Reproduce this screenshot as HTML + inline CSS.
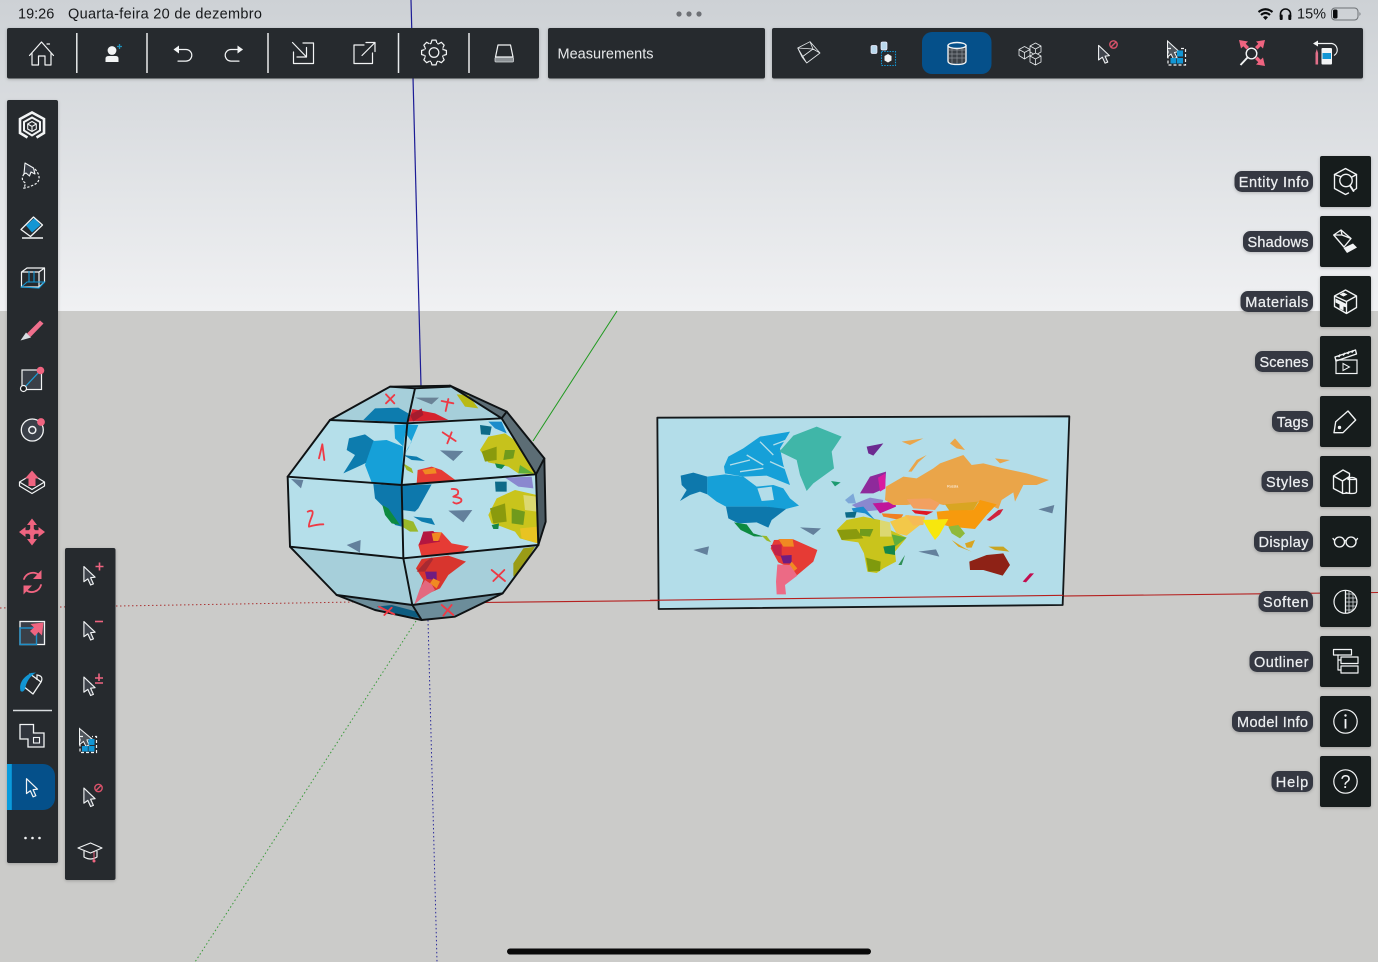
<!DOCTYPE html>
<html><head><meta charset="utf-8"><title>SketchUp</title>
<style>
html,body{margin:0;padding:0;background:#cbcbc9;overflow:hidden}
svg{display:block;font-family:"Liberation Sans",sans-serif}
.w{fill:none;stroke:#f2f4f5;stroke-width:1.35;stroke-linejoin:round;stroke-linecap:round}
.t{fill:none;stroke:#f2f4f5;stroke-width:1.2;stroke-linejoin:round;stroke-linecap:round}
.th{fill:none;stroke:#e4e8ea;stroke-width:.8;stroke-linejoin:round;stroke-linecap:round}
.lab{fill:#eceef0;stroke:#eceef0;stroke-width:.25;font-size:14.5px;text-anchor:middle}
.pill{fill:#343942}
.btn{fill:#181c1f}
.bar{fill:#26292d}
.c{fill:#3f444c;stroke:#f2f4f5;stroke-width:1;stroke-linejoin:round}
.b{fill:#1296d4}
.p{fill:#ef6480}
.ps{fill:none;stroke:#ef6480;stroke-width:1.8;stroke-linecap:round}
</style></head><body>
<svg width="1378" height="962" viewBox="0 0 1378 962" xmlns="http://www.w3.org/2000/svg">
<defs>
<linearGradient id="sky" x1="0" y1="0" x2="0" y2="1"><stop offset="0" stop-color="#cdd1d5"/><stop offset="1" stop-color="#f0f1f3"/></linearGradient>
<filter id="sh" x="-5%" y="-5%" width="110%" height="115%"><feDropShadow dx="0" dy="1" stdDeviation="1.5" flood-color="#000" flood-opacity=".22"/></filter>
<filter id="soft" x="-2%" y="-2%" width="104%" height="104%"><feGaussianBlur stdDeviation="1.1"/></filter>
<path id="cur" d="M-5,-8 L5,1.5 L1,2 L3.5,7.5 L1,8.5 L-1.5,3 L-5,5.5 Z"/>
<path id="tooth" d="M-2.9,-9.6 L-2,-12.4 H2 L2.9,-9.6" fill="none" stroke="#f2f4f5" stroke-width="1.25" stroke-linejoin="round"/>
</defs>

<!-- backdrop -->
<rect width="1378" height="311" fill="url(#sky)"/>
<rect y="311" width="1378" height="651" fill="#cbcbc9"/>

<!-- axes -->
<path d="M411,0 L421,386" stroke="#1c1c96" stroke-width="1.2" fill="none"/>
<path d="M533,441 L617,311" stroke="#1f9a1f" stroke-width="1" fill="none"/>
<path d="M480,602.5 L1378,592.5" stroke="#b5201f" stroke-width="1.1" fill="none"/>
<path d="M0,608 L355,602" stroke="#a33" stroke-width="1" stroke-dasharray="1.5 2.5" fill="none"/>
<path d="M416,621 L195,962" stroke="#3a9a3a" stroke-width="1" stroke-dasharray="1.5 2.5" fill="none"/>
<path d="M428,620 L437,962" stroke="#2a2a9a" stroke-width="1" stroke-dasharray="1.5 2.5" fill="none"/>

<!-- flat map -->
<g transform="translate(650,405) scale(.33333)">
<path d="M22,38 L1258,34 L1238,600 L26,612 Z" fill="#b3dde9"/>
<g filter="url(#soft)">
<path d="M92,212 L130,203 L172,215 L172,268 L150,260 L120,270 L90,288 L110,255 L95,240Z" fill="#0b78ac"/>
<path d="M172,215 L225,208 L280,215 L320,245 L370,240 L400,250 L420,280 L447,302 L400,314 L350,305 L228,305 L200,290 L172,268Z" fill="#12a0d8"/>
<path d="M222,185 L235,155 L280,130 L330,95 L420,80 L390,130 L400,180 L420,240 L350,212 L280,215 L225,205Z" fill="#12a0d8"/>
<path d="M240,180 L300,165 M290,150 L340,180 M330,110 L370,150 M270,200 L340,190 M370,120 L410,105 M360,170 L405,190" stroke="#b3dde9" stroke-width="4" fill="none"/>
<path d="M322,250 L365,245 L372,285 L335,288Z" fill="#b3dde9"/>
<path d="M388,140 L430,92 L500,65 L575,95 L545,140 L552,190 L490,235 L470,258 L450,210 L440,165Z" fill="#3fb6a8"/>
<path d="M228,305 L350,305 L408,312 L365,345 L355,368 L320,352 L265,355 L235,340Z" fill="#0b78ac"/>
<path d="M252,352 L290,358 L310,385 L342,395 L312,394 L272,375Z" fill="#0f8a40"/>
<path d="M335,392 L350,393 L364,412 L350,407Z" fill="#9ab82a"/>
<path d="M372,405 L430,403 L502,435 L490,470 L440,512 L425,490 L385,472 L362,430Z" fill="#e63a35"/>
<path d="M385,402 L428,402 L432,425 L400,425Z" fill="#f08a20"/>
<path d="M362,420 L395,418 L395,455 L375,450Z" fill="#c0204a"/>
<path d="M392,452 L425,450 L425,475 L400,475Z" fill="#6f1d80"/>
<path d="M425,470 L442,490 L430,500 L418,480Z" fill="#f08a20"/>
<path d="M382,478 L420,480 L442,512 L405,540 L408,568 L380,568 L378,530Z" fill="#ec6a85"/>
<path d="M560,375 L590,345 L640,335 L690,345 L720,375 L770,398 L735,440 L738,470 L700,490 L680,504 L652,500 L642,445 L625,412 L575,405Z" fill="#c9c41a"/>
<path d="M562,375 L620,372 L640,400 L575,405Z" fill="#8a9a10"/>
<path d="M690,345 L720,352 L725,395 L690,395Z" fill="#dcd870"/>
<path d="M700,425 L735,420 L735,450 L705,445Z" fill="#17864a"/>
<path d="M725,388 L770,398 L735,425Z" fill="#5fae3a"/>
<path d="M648,458 L692,470 L690,498 L655,500Z" fill="#7f9a10"/>
<path d="M630,372 L670,372 L660,395 L630,392Z" fill="#6f9a1c"/>
<path d="M745,480 L765,450 L755,480Z" fill="#2f8f55"/>
<path d="M630,265 L660,215 L708,200 L705,250 L670,265Z" fill="#8e2a9b"/>
<path d="M684,218 L706,205 L706,250 L690,260Z" fill="#d81aa0"/>
<path d="M605,300 L660,278 L700,285 L690,315 L640,320Z" fill="#8a88cf"/>
<path d="M668,295 L735,290 L738,305 L690,325Z" fill="#c0189a"/>
<path d="M605,310 L640,305 L675,345 L645,325 L610,320Z" fill="#1c8ccb"/>
<path d="M585,322 L620,320 L615,338 L588,338Z" fill="#0d6a88"/>
<path d="M585,285 L610,265 L618,295 L595,295Z" fill="#7da8d8"/>
<path d="M708,245 L760,215 L800,220 L850,190 L870,175 L940,150 L965,180 L1000,175 L1060,190 L1130,205 L1197,225 L1160,240 L1120,240 L1095,290 L1090,262 L1055,285 L1045,312 L1000,290 L880,300 L840,290 L770,300 L730,300 L705,285Z" fill="#eaa548"/>
<path d="M775,200 L800,165 L830,150 L805,172 L785,200Z" fill="#eaa548"/>
<path d="M900,115 L915,100 L945,135 L920,130Z" fill="#eaa548"/>
<path d="M770,282 L840,280 L870,295 L855,315 L790,310Z" fill="#f2a060"/>
<path d="M885,298 L985,290 L970,315 L900,320Z" fill="#d9a520"/>
<path d="M860,320 L900,316 L970,315 L990,285 L1040,298 L1010,330 L975,372 L900,365 L865,355Z" fill="#f79a0a"/>
<path d="M785,315 L850,320 L830,330 L795,325Z" fill="#e01820"/>
<path d="M695,325 L760,328 L750,345 L700,335Z" fill="#f08020"/>
<path d="M720,350 L775,330 L810,360 L770,392 L740,385Z" fill="#f3c84a"/>
<path d="M765,330 L825,335 L820,360 L790,362Z" fill="#f6bb55"/>
<path d="M818,345 L895,342 L868,390 L855,405 L838,380Z" fill="#f7e70e"/>
<path d="M895,365 L925,360 L945,385 L930,400 L905,385Z" fill="#8fb93a"/>
<path d="M905,405 L945,430 L965,440 L925,425Z" fill="#d9a520"/>
<path d="M945,415 L975,405 L965,428 L950,428Z" fill="#d9a520"/>
<path d="M1015,425 L1060,425 L1078,440 L1035,435Z" fill="#c9a520"/>
<path d="M1010,345 L1045,315 L1060,312 L1050,328 L1020,348Z" fill="#d0203a"/>
<path d="M958,470 L1010,450 L1060,445 L1080,480 L1058,512 L1000,495 L960,495Z" fill="#8e2412"/>
<path d="M1118,530 L1140,505 L1152,505 L1128,532Z" fill="#c21050"/>
<path d="M650,125 L700,115 L670,152 L655,145Z" fill="#6c2a90"/>
<path d="M755,110 L820,100 L780,120Z M1035,160 L1080,165 L1050,175Z" fill="#eaa548"/>
<path d="M543,228 L572,232 L555,244Z" fill="#1c9a70"/>
<path d="M450,367 L513,370 L490,390Z M130,435 L177,424 L172,450Z M805,440 L858,433 L868,455Z M1165,313 L1213,300 L1207,325Z" fill="#64809c"/>
</g>
<text x="908" y="248" font-size="11" fill="#fff" text-anchor="middle">Russia</text>
<path d="M22,38 L1258,34 L1238,600 L26,612 Z" fill="none" stroke="#14181a" stroke-width="5.500" stroke-linejoin="round"/>
<path d="M0,586 L1240,571" stroke="#b5201f" stroke-width="3.300"/>
</g>

<!-- globe -->
<g transform="translate(275,375) scale(.33333)">
<path d="M345,35 L525,32 L695,110 L808,250 L812,440 L790,510 L683,655 L540,725 L440,735 L300,705 L185,660 L45,515 L38,305 L165,135Z" fill="#a6cfda"/>
<path d="M525,32 L695,110 L808,250 L785,298 L680,130Z" fill="#5c6d75"/>
<path d="M808,250 L812,440 L790,510 L783,298Z" fill="#4b5a62"/>
<path d="M165,135 L397,145 L380,330 L38,305Z M397,145 L680,130 L782,298 L380,330Z M38,305 L380,330 L385,550 L45,515Z M380,330 L783,298 L790,510 L385,550Z" fill="#b5dfea"/>
<path d="M185,660 L412,690 L440,735 L300,705Z M412,690 L683,655 L540,725 L440,735Z" fill="#6c8d9a"/>
<g filter="url(#soft)">
<path d="M265,135 L300,100 L370,98 L400,115 L397,145Z" fill="#0e7cae"/>
<path d="M400,140 L412,102 L480,115 L520,135Z" fill="#d5212d"/>
<path d="M440,100 L405,120 L415,140 L445,120Z" fill="#a51c2f"/>
<path d="M420,68 L492,68 L470,88Z" fill="#6a8296"/>
<path d="M545,58 L580,60 L610,100 L570,95Z" fill="#b9ba18"/>
<path d="M222,190 L270,178 L300,200 L290,255 L260,270 L205,295 L240,240 L215,225Z" fill="#0e7cae"/>
<path d="M295,198 L335,195 L385,215 L380,328 L290,322 L270,270Z" fill="#12a0d8"/>
<path d="M358,150 L395,148 L385,215 L360,190Z" fill="#12a0d8"/>
<path d="M387,240 L410,200 L385,165 L395,148 L430,150 L400,220Z" fill="#12a0d8"/>
<path d="M495,226 L565,228 L535,258Z" fill="#64809c"/>
<path d="M615,150 L650,155 L645,180 L618,178Z" fill="#0d6a88"/>
<path d="M640,140 L680,140 L695,175 L660,160Z" fill="#1c8ccb"/>
<path d="M615,225 L640,185 L690,175 L725,200 L780,298 L730,295 L700,275 L640,262Z" fill="#c6c21a"/>
<path d="M620,230 L665,215 L665,255 L630,260Z" fill="#8a9a10"/>
<path d="M690,225 L720,225 L715,250 L685,255Z" fill="#6f9a1c"/>
<path d="M660,265 L690,270 L680,282 L665,278Z" fill="#17864a"/>
<path d="M735,270 L775,295 L730,295Z" fill="#5fae3a"/>
<path d="M425,325 L428,285 L470,275 L500,285 L545,318Z" fill="#e63a35"/>
<path d="M442,285 L480,278 L485,295 L450,298Z" fill="#f08a20"/>
<path d="M385,265 L410,280 L415,295 L395,285Z" fill="#9ab82a"/>
<path d="M385,240 L425,245 L450,258 L410,255Z" fill="#0e7cae"/>
<path d="M295,327 L380,332 L380,455 L360,450 L330,400 L300,370Z" fill="#0b78ac"/>
<path d="M322,390 L340,400 L375,450 L350,445 L330,420Z" fill="#0f8a40"/>
<path d="M48,312 L85,315 L78,340Z M215,510 L257,495 L255,533Z" fill="#64809c"/>
<path d="M380,332 L470,328 L430,400 L420,410 L380,405Z" fill="#0b78ac"/>
<path d="M382,430 L415,440 L430,470 L405,470 L382,455Z" fill="#9ab82a"/>
<path d="M415,425 L470,430 L480,450 L440,440Z" fill="#0e7cae"/>
<path d="M520,407 L592,405 L565,442Z" fill="#64809c"/>
<path d="M660,320 L695,320 L695,350 L662,350Z" fill="#0d6a88"/>
<path d="M690,308 L770,305 L775,340 L730,335Z" fill="#8a88cf"/>
<path d="M640,420 L665,370 L720,345 L785,360 L788,505 L735,490 L720,470 L680,455 L650,445Z" fill="#c9c41a"/>
<path d="M645,400 L690,385 L695,440 L655,445Z" fill="#8a9a10"/>
<path d="M745,360 L785,365 L785,410 L750,405Z" fill="#dcd870"/>
<path d="M710,400 L750,410 L745,450 L710,445Z" fill="#6f9a1c"/>
<path d="M735,460 L788,455 L788,505 L740,490Z" fill="#e8c324"/>
<path d="M650,450 L672,445 L670,462 L655,462Z" fill="#17864a"/>
<path d="M430,510 L450,470 L500,472 L530,505 L582,515 L565,530 L440,545Z" fill="#e63a35"/>
<path d="M432,510 L445,470 L475,468 L495,500Z" fill="#b41240"/>
<path d="M470,475 L500,472 L490,498 L475,498Z" fill="#f08a20"/>
<path d="M423,580 L440,552 L520,542 L573,560 L520,600 L495,640 L450,660 L420,685 L445,615Z" fill="#d8352f"/>
<path d="M450,590 L485,590 L485,615 L455,612Z" fill="#6f1d80"/>
<path d="M475,610 L495,620 L485,640 L465,625Z" fill="#f08a20"/>
<path d="M450,615 L470,628 L480,645 L440,670 L418,688 L435,640Z" fill="#e3677f"/>
<path d="M425,590 L452,560 L470,548 L475,552 L450,590Z" fill="#a82a30"/>
<path d="M715,565 L745,520 L780,515 L735,590 L715,605Z" fill="#9a9c18"/>
<path d="M305,695 L350,690 L425,710 L440,730 L370,718Z" fill="#0e5c80"/>
</g>
<g fill="none" stroke="#0e1214" stroke-width="5.800" stroke-linejoin="round" stroke-linecap="round">
<path d="M345,35 L525,32 L695,110 L808,250 L812,440 L790,510 L683,655 L540,725 L440,735 L300,705 L185,660 L45,515 L38,305 L165,135Z"/>
<path d="M165,135 L397,145 L680,130 M38,305 L380,330 L783,298 M45,515 L385,550 L790,510 M185,660 L412,690 L683,655 M345,35 L420,40 L525,35"/>
<path d="M420,40 L397,145 L380,330 L385,550 L412,690 L440,735"/>
<path d="M525,32 L680,130 L783,298 L790,510 M695,110 L680,130 M808,250 L783,298"/>
</g>
<g fill="none" stroke="#ee3a45" stroke-width="5.500" stroke-linecap="round" stroke-linejoin="round">
<path d="M333,58 L358,85 M358,60 L333,85"/>
<path d="M500,78 L535,85 M520,72 L512,108"/>
<path d="M503,172 L542,198 M530,172 L517,205"/>
<path d="M650,585 L690,618 M688,585 L655,618"/>
<path d="M500,690 L535,720 M530,690 L505,722"/>
<path d="M312,695 L358,718 M350,698 L328,720"/>
<path d="M132,250 L142,208 L148,255"/>
<path d="M98,410 Q120,400 110,425 Q100,450 102,455 Q125,448 145,448"/>
<path d="M530,342 Q555,340 548,358 L535,365 Q565,368 558,380 Q545,390 535,382"/>
</g>
</g>

<!-- status bar -->
<text x="18" y="18.5" font-size="14.5" fill="#16181a">19:26</text>
<text x="68" y="18.5" font-size="14.5" fill="#16181a" textLength="194">Quarta-feira 20 de dezembro</text>
<circle cx="679" cy="14" r="2.6" fill="#6d7075"/><circle cx="689" cy="14" r="2.6" fill="#6d7075"/><circle cx="699" cy="14" r="2.6" fill="#6d7075"/>
<g fill="none" stroke="#0a0c0e">
<path d="M1258.500,12 Q1265.500,6.500 1272.500,12" stroke-width="2.100"/>
<path d="M1261,15 Q1265.500,11 1270,15" stroke-width="2.100"/>
</g>
<path d="M1263,17.200 Q1265.500,15 1268,17.200 L1265.500,20Z" fill="#0a0c0e"/>
<path d="M1280.500,17 V14 a5,5 0 0 1 10,0 V17" fill="none" stroke="#0a0c0e" stroke-width="1.600"/>
<rect x="1279.700" y="14.500" width="3" height="5.500" rx="1" fill="#0a0c0e"/><rect x="1288.300" y="14.500" width="3" height="5.500" rx="1" fill="#0a0c0e"/>
<text x="1297" y="18.500" font-size="14.500" fill="#16181a">15%</text>
<rect x="1331.500" y="8" width="26.500" height="12" rx="3.500" fill="none" stroke="#6d7175" stroke-width="1"/>
<rect x="1333" y="9.500" width="4.500" height="9" rx="1.500" fill="#0a0c0e"/>
<path d="M1359.500,12 a2.500,2.500 0 0 1 0,4" fill="#6d7175"/>

<!-- top toolbars -->
<g filter="url(#sh)">
<rect class="bar" x="7" y="28" width="532" height="50.500" rx="2"/>
<rect class="bar" x="548" y="28" width="217" height="50.500" rx="2"/>
<rect class="bar" x="772" y="28" width="591" height="50.500" rx="2"/>
</g>
<g stroke="#e8eaec" stroke-width="1.500"><path d="M76.800,33 V73 M147,33 V73 M268,33 V73 M398.500,33 V73 M469,33 V73"/></g>
<text x="557.500" y="58.500" font-size="14.500" fill="#e6e8ea" textLength="96">Measurements</text>

<!-- home -->
<path class="t" d="M29.500,55.500 L41.500,42 L53.500,55.500 M32,53.500 V65 H38.500 V56 H45 V65 H51 V53.500 M47,44 H49.500"/>
<!-- user -->
<circle cx="112" cy="50.500" r="4.400" fill="#f2f4f5"/><path d="M105.500,62 V58.500 Q105.500,56 109,56 H115.500 Q118.500,56 118.500,58.500 V62Z" fill="#f2f4f5"/>
<path d="M119.500,44 V49 M117,46.500 H122" stroke="#1f8fb8" stroke-width="1.300"/>
<!-- undo/redo -->
<path class="t" d="M175,49.500 H186 a5.800,5.800 0 0 1 0,11.600 H178"/><path d="M173.500,49.500 L179,45.500 V53.500Z" fill="#f2f4f5"/>
<path class="t" d="M242,49.500 H231 a5.800,5.800 0 0 0 0,11.600 H239"/><path d="M243,49.500 L237.500,45.500 V53.500Z" fill="#f2f4f5"/>
<!-- import / export -->
<path class="t" d="M293.500,52 V63.500 H313.500 V43 H303 M292.500,42.500 L306.500,57 M306.500,47.500 V57 H297"/>
<path class="t" d="M364,45 H354 V63.500 H372.500 V53 M362,55.500 L375,42.500 M366,42.500 H375 V51.500"/>
<!-- gear -->
<g transform="translate(434,52.500)">
<circle r="9.600" fill="none" stroke="#f2f4f5" stroke-width="1.250" stroke-dasharray="1.740 5.800" stroke-dashoffset="-2.900"/>
<circle r="4.800" fill="none" stroke="#f2f4f5" stroke-width="1.250"/>
<use href="#tooth"/><use href="#tooth" transform="rotate(45)"/><use href="#tooth" transform="rotate(90)"/><use href="#tooth" transform="rotate(135)"/><use href="#tooth" transform="rotate(180)"/><use href="#tooth" transform="rotate(225)"/><use href="#tooth" transform="rotate(270)"/><use href="#tooth" transform="rotate(315)"/>
</g>
<!-- printer -->
<path class="t" d="M498,45 H510.500 L513,57 H495.500Z"/><rect x="495" y="57.500" width="18.500" height="4.500" rx="1" fill="#8b9094" stroke="#d0d3d6" stroke-width=".8"/>

<!-- right toolbar -->
<path class="th" d="M797.700,48 L810,41.700 L820,53 L806.700,63Z M797.700,48 L813,49 L820,53 M813,49 L810,41.700 M802,57 L813,49 M802,57 L806.700,63 M797.700,48 L802,57"/>
<g>
<rect x="871" y="45.500" width="6" height="8" rx="1.500" fill="#b9d8ec" stroke="#eef" stroke-width=".7"/>
<rect x="881" y="42" width="6" height="8" rx="1.500" fill="#b9d8ec" stroke="#eef" stroke-width=".7"/>
<rect x="881.500" y="51.500" width="14" height="14" fill="none" stroke="#1296d4" stroke-width="1.100" stroke-dasharray="1.500 1.200"/>
<path d="M884.500,56 L888,54 L891.500,56 V60.500 L888,62.500 L884.500,60.500Z" fill="#f2f4f5"/>
</g>
<rect x="922" y="32" width="69.500" height="42" rx="10" fill="#05508a"/>
<g>
<rect x="948" y="43.500" width="18" height="20" rx="2" fill="#3c4248"/>
<g stroke="#8a9096" stroke-width=".7"><path d="M952,46 V63 M957,46 V64 M962,46 V63 M949,50 H965 M949,54 H965 M949,58 H965"/></g>
<path class="w" d="M948,45.500 V61 Q948,64.500 957,64.500 Q966,64.500 966,61 V45.500"/><ellipse cx="957" cy="45.500" rx="9" ry="3" fill="#05508a" stroke="#f2f4f5" stroke-width="1.400"/>
</g>
<g class="th">
<path d="M1019,49.500 L1024.500,46.500 L1030,49.500 V55.500 L1024.500,59 L1019,55.500Z M1019,49.500 L1024.500,52.500 L1030,49.500 M1024.500,52.500 V59"/>
<path d="M1030,46 L1035.500,43 L1041,46 V52 L1035.500,55 L1030,52Z M1030,46 L1035.500,49 L1041,46 M1035.500,49 V55"/>
<path d="M1030,56 L1035.500,53 L1041,56 V62 L1035.500,65 L1030,62Z M1030,56 L1035.500,59 L1041,56 M1035.500,59 V65" fill="#26292d"/>
</g>
<use href="#cur" transform="translate(1104,54) scale(1.080)" class="c"/>
<circle cx="1113.500" cy="44.500" r="3.700" fill="none" stroke="#d9526a" stroke-width="1.400"/><path d="M1111,47 L1116,42" stroke="#d9526a" stroke-width="1.400"/>
<g>
<path d="M1167.500,41 L1179,51.500 L1174.500,52.500 L1177,57.500 L1173.500,59 L1171,54 L1167.500,57Z" fill="#50565c" stroke="#f2f4f5" stroke-width="1"/>
<path d="M1171,48.500 H1168 V65 H1185.500 V48.500 H1180" fill="none" stroke="#f2f4f5" stroke-width="1.200" stroke-dasharray="3 2"/>
<rect x="1177" y="50.500" width="6" height="6" class="b"/><rect x="1170.500" y="58" width="5.800" height="5.500" class="b"/><rect x="1177" y="58" width="6" height="5.500" class="b"/>
</g>
<g>
<circle cx="1251.500" cy="53.500" r="5.300" fill="none" stroke="#f2f4f5" stroke-width="1.400"/>
<path d="M1247.500,57.500 L1240.500,65" stroke="#f2f4f5" stroke-width="1.900"/>
<path class="p" d="M1239,40 L1248,41.500 L1245.700,43.800 L1249,47 L1246.500,49.500 L1243.300,46.200 L1241,48.500Z M1265,40 L1256,41.500 L1258.300,43.800 L1255,47 L1257.500,49.500 L1260.700,46.200 L1263,48.500Z M1265,66 L1256,64.500 L1258.300,62.200 L1255,59 L1257.500,56.500 L1260.700,59.800 L1263,57.500Z"/>
</g>
<g>
<path d="M1316,43.500 H1332 a6.500,6.500 0 0 1 2,12" fill="none" stroke="#f2f4f5" stroke-width="1.200"/><path d="M1313,43.500 L1318,40.500 V46.500Z" fill="#f2f4f5"/>
<rect x="1321.500" y="48" width="10.500" height="16.500" rx="1" fill="#f2f4f5"/><rect x="1322.500" y="53" width="8.500" height="6" class="b"/>
<rect x="1315.500" y="53" width="2.600" height="11.500" fill="#e2708a"/><path d="M1315.500,53 L1316.800,49 L1318.100,53Z" fill="#e2708a"/>
</g>

<!-- left toolbar -->
<g filter="url(#sh)">
<rect class="bar" x="7" y="100" width="51" height="763" rx="2"/>
<rect class="bar" x="65" y="548" width="50.500" height="332" rx="2"/>
</g>
<g fill="none" stroke="#f2f4f5" stroke-linejoin="miter">
<path d="M36.500,137.500 L44,133 V119 L32,112.500 L20,119 V133 L27.500,137.500" stroke-width="2.600"/>
<path d="M32,117.500 L40,122 V130.500 L32,135.500 L24,130.500 V122Z" stroke-width="2"/>
<path d="M32,121.500 L36.300,124 V129 L32,131.500 L27.700,129 V124Z M27.700,124 L32,126.500 L36.300,124 M32,126.500 V131.500" stroke-width="1.100"/>
</g>
<path d="M25,163 L33.500,168 L35,174 L31,172 L29.500,176 L26,173 L24,174Z" fill="#3a3f48" stroke="#f2f4f5" stroke-width="1.100" stroke-linejoin="round"/>
<path d="M35,169 Q42,177 37,183 Q31,187 22,188.500 M24,174 Q20,180 25.500,183 L24.500,187" fill="none" stroke="#f2f4f5" stroke-width="1.200" stroke-dasharray="2.400 1.600"/>
<path d="M26,225.500 L34.500,218 L40.500,225 L32,232.500Z" class="b"/>
<path d="M21,229.500 L33.500,217 L42.500,225 L30.500,236.500Z" fill="none" stroke="#f2f4f5" stroke-width="1.300" stroke-linejoin="round"/>
<path d="M22,238 H43" stroke="#f2f4f5" stroke-width="1.400"/>
<path class="t" d="M21.500,272 H39 V287 H21.500Z M21.500,272 L27,268 H44.500 V282 L39,287 M39,272 L44.500,268"/>
<path d="M21.500,287 L27,282 H44.500 L39,288 Z M29,271 V282 M34,271 V282" fill="none" stroke="#1296d4" stroke-width="1.100"/>
<path d="M27,333.500 L40,320.500 L43.500,323.500 L30.500,337Z" fill="#ef6f8c"/>
<path d="M20.500,340.500 L26,332.500 L31,337.500Z" fill="#d8dde2"/>
<rect x="22" y="370" width="19.500" height="19.500" fill="#3a3f48" stroke="#f2f4f5" stroke-width="1.200"/>
<path d="M24,388 L40,371" stroke="#1f9fd8" stroke-width="1.200"/>
<circle cx="40.500" cy="370.500" r="3.800" class="p"/>
<circle cx="23.500" cy="388.500" r="3" fill="#14181a" stroke="#f2f4f5" stroke-width="1.200"/>
<circle cx="32.300" cy="430" r="11" fill="#3a3f48" stroke="#f2f4f5" stroke-width="1.300"/>
<circle cx="32.300" cy="430" r="3.500" fill="none" stroke="#f2f4f5" stroke-width="1.500"/>
<circle cx="41" cy="422" r="3.900" class="p"/>
<path d="M19.500,482 L32,474.500 L44.500,482 L32,489.500Z M19.500,482 V486 L32,493.500 L44.500,486 V482" fill="#26292d" stroke="#f2f4f5" stroke-width="1.200" stroke-linejoin="round"/>
<path d="M32,470.500 L39,478.500 H35.500 V486 H28.500 V478.500 H25Z" class="p"/>
<g class="p">
<path d="M32,518.500 L37,525 H27Z M32,545.500 L37,539 H27Z M19,532 L25.500,527 V537Z M45,532 L38.500,527 V537Z"/>
<rect x="30.200" y="524" width="3.600" height="16"/><rect x="24" y="530.200" width="16" height="3.600"/>
<path d="M32,527 L37,532 L32,537 L27,532Z"/>
</g>
<path class="ps" d="M24,579 A9.500,9.500 0 0 1 39,575 M41,585 A9.500,9.500 0 0 1 26,590"/>
<path d="M41.500,570 V579 H33Z M23.500,594.500 V585.500 H32Z" class="p"/>
<rect x="20" y="621.500" width="24.500" height="23" fill="#3a3f48" stroke="#f2f4f5" stroke-width="1.300"/>
<path d="M20,628 H36.500 V644.500 H20Z" fill="none" stroke="#1f8fc8" stroke-width="1.400"/>
<path d="M43.500,622.500 L42,635.500 L38.500,632 L35,636 L30,631 L34,627.500 L30.500,624Z" class="p"/>
<path d="M30,674 L41,682 L33,694 L23,686Z" fill="#26292d" stroke="#f2f4f5" stroke-width="1.300" stroke-linejoin="round"/>
<path d="M41,682 Q44,676 37,675 L37,680" fill="none" stroke="#f2f4f5" stroke-width="1.200"/>
<path d="M20.500,691 Q18,680 31,673 L36,672.500 Q27,678 25,689Q23,693 20.500,691Z" class="b"/>
<path d="M13,710.500 H52" stroke="#d8dcdf" stroke-width="1.500"/>
<path d="M20,724.500 H33.500 V733 H44 V747 H28 V739 H20Z" fill="#30343c" stroke="#f2f4f5" stroke-width="1.300"/>
<rect x="33.500" y="737.500" width="6" height="5.500" fill="none" stroke="#f2f4f5" stroke-width="1.100"/>
<path d="M7,764 H43 a12,12 0 0 1 12,12 V798 a12,12 0 0 1 -12,12 H7Z" fill="#05508a"/>
<rect x="7" y="764" width="4.800" height="46" fill="#0a9bdc"/>
<use href="#cur" transform="translate(32,787.500) scale(1.100)" fill="#05508a" stroke="#f2f4f5" stroke-width="1.100" stroke-linejoin="round"/>
<circle cx="25.500" cy="838" r="1.300" fill="#f2f4f5"/><circle cx="32.500" cy="838" r="1.300" fill="#f2f4f5"/><circle cx="39.500" cy="838" r="1.300" fill="#f2f4f5"/>

<!-- secondary toolbar -->
<use href="#cur" transform="translate(89.500,575.500) scale(1.120)" class="c"/>
<path d="M95.500,566.500 H103.500 M99.500,562.500 V570.500" stroke="#ef6480" stroke-width="1.600"/>
<use href="#cur" transform="translate(89.500,630.500) scale(1.120)" class="c"/>
<path d="M95,621.500 H103" stroke="#ef6480" stroke-width="1.600"/>
<use href="#cur" transform="translate(89.500,686) scale(1.120)" class="c"/>
<path d="M95,678 H103 M99,673.500 V681 M95,683 H103" stroke="#ef6480" stroke-width="1.600"/>
<path d="M79.500,728.500 L92,739 L87,740 L89,745 L86,746.500 L83.500,741.500 L79.500,744.500Z" fill="#50565c" stroke="#f2f4f5" stroke-width="1"/>
<path d="M83,736.500 H80 V752.500 H96.500 V736.500 H92" fill="none" stroke="#f2f4f5" stroke-width="1.200" stroke-dasharray="3 2"/>
<rect x="88.500" y="739" width="6" height="6" class="b"/><rect x="82" y="746" width="5.800" height="5.500" class="b"/><rect x="88.500" y="746" width="6" height="5.500" class="b"/>
<use href="#cur" transform="translate(89.500,797) scale(1.120)" class="c"/>
<circle cx="98.500" cy="788" r="3.700" fill="none" stroke="#d9526a" stroke-width="1.400"/><path d="M96,790.500 L101,785.500" stroke="#d9526a" stroke-width="1.400"/>
<path d="M78,848 L90.500,843 L102,848 L90.500,853Z M84,851 V857 Q90.500,861 97,857 V851" fill="#26292d" stroke="#f2f4f5" stroke-width="1.200" stroke-linejoin="round"/>
<path d="M94,852 V860" stroke="#ef6480" stroke-width="1"/><circle cx="94" cy="861" r="1.500" class="p"/>

<!-- right side buttons -->
<g filter="url(#sh)">
<rect class="btn" x="1320" y="156" width="51" height="51" rx="2"/><rect class="btn" x="1320" y="216" width="51" height="51" rx="2"/><rect class="btn" x="1320" y="276" width="51" height="51" rx="2"/><rect class="btn" x="1320" y="336" width="51" height="51" rx="2"/><rect class="btn" x="1320" y="396" width="51" height="51" rx="2"/><rect class="btn" x="1320" y="456" width="51" height="51" rx="2"/><rect class="btn" x="1320" y="516" width="51" height="51" rx="2"/><rect class="btn" x="1320" y="576" width="51" height="51" rx="2"/><rect class="btn" x="1320" y="636" width="51" height="51" rx="2"/><rect class="btn" x="1320" y="696" width="51" height="51" rx="2"/><rect class="btn" x="1320" y="756" width="51" height="51" rx="2"/>
<rect class="pill" x="1234.500" y="171" width="78.500" height="21" rx="7.500"/><rect class="pill" x="1243" y="231" width="70" height="21" rx="7.500"/><rect class="pill" x="1240.500" y="291" width="72.500" height="21" rx="7.500"/><rect class="pill" x="1255" y="351" width="58" height="21" rx="7.500"/><rect class="pill" x="1272" y="411" width="41" height="21" rx="7.500"/><rect class="pill" x="1261.500" y="471" width="51.500" height="21" rx="7.500"/><rect class="pill" x="1254" y="531" width="59" height="21" rx="7.500"/><rect class="pill" x="1258.500" y="591" width="54.500" height="21" rx="7.500"/><rect class="pill" x="1249.500" y="651" width="63.500" height="21" rx="7.500"/><rect class="pill" x="1232" y="711" width="81" height="21" rx="7.500"/><rect class="pill" x="1271.500" y="771" width="41.500" height="21" rx="7.500"/>
</g>
<text class="lab" x="1273.800" y="186.800" textLength="70">Entity Info</text>
<text class="lab" x="1278" y="246.800" textLength="61">Shadows</text>
<text class="lab" x="1276.800" y="306.800" textLength="63">Materials</text>
<text class="lab" x="1284" y="366.800" textLength="49">Scenes</text>
<text class="lab" x="1292.500" y="426.800" textLength="31.500">Tags</text>
<text class="lab" x="1287.200" y="486.800" textLength="42.500">Styles</text>
<text class="lab" x="1283.500" y="546.800" textLength="50">Display</text>
<text class="lab" x="1285.700" y="606.800" textLength="45.500">Soften</text>
<text class="lab" x="1281.200" y="666.800" textLength="54.500">Outliner</text>
<text class="lab" x="1272.500" y="726.800" textLength="71">Model Info</text>
<text class="lab" x="1292" y="786.800" textLength="32.500">Help</text>

<!-- Entity info -->
<g class="w" transform="translate(1345.500,181.500)">
<path d="M-11,-7 L0,-13 L11,-7 V7 L8,9 M-11,-7 V7 L0,13 L3,11.500"/>
<circle cx=".5" cy="-1" r="6.200"/><path d="M4.500,4 L8,9.500" style="stroke-width:1.900"/><path d="M-11,-7 L-5,-5 M11,-7 L6.500,-4.500"/>
</g>
<!-- Shadows -->
<path class="w" d="M1333.700,235 L1341,230 L1351,238.500 L1344,247Z M1341,230 L1342,235 L1351,238.500 M1333.700,235 L1342,235"/>
<path d="M1343.500,248 L1353,243.500 L1357,247.500 L1347,253Z" fill="#f2f4f5"/>
<!-- Materials -->
<g transform="translate(1345.500,301.500)">
<path class="w" d="M0,-11.500 L11,-5.500 V6 L1,12 L-11,5 V-5.500Z M-11,-5.500 L1,0 L11,-5.500 M1,0 V12"/>
<path d="M-10,-3 L-6,-1 V3 L-10,1Z M-6,-1 L-2,1 V5 L-6,3Z M-6,3 L-2,5 V9 L-6,7Z M-2,1 L1,2.500 V6 L-2,5Z M-6,-7 L-2,-9 L2,-7 L-2,-5Z" fill="#f2f4f5"/>
</g>
<!-- Scenes -->
<g transform="translate(1345.500,361.500)">
<rect x="-9.500" y="-1.500" width="21" height="13.500" fill="none" stroke="#f2f4f5" stroke-width="1.200"/>
<path class="w" d="M-10.500,-4.500 L10,-11.500 L11,-7.500 L-9.500,-.5Z"/>
<path d="M-7,-4.500 L-5,-7 M-2.500,-6 L-.5,-8.500 M2,-7.500 L4,-10 M6,-9 L8,-11" stroke="#f2f4f5" stroke-width="1.700"/>
<path d="M-2.500,2 L4,5.500 L-2.500,9Z" fill="none" stroke="#f2f4f5" stroke-width="1"/>
</g>
<!-- Tags -->
<path class="w" d="M1335.700,421.700 L1348,411 L1355.700,420 L1343,432.700 H1334Z"/><circle cx="1339.500" cy="427.500" r="1.700" fill="#f2f4f5"/>
<!-- Styles -->
<g class="w">
<path d="M1333.500,476 L1343,470 L1349.500,473.500 V493 L1343,493.500 L1333.500,488.500Z M1333.500,476 L1342.500,481 V493.500 M1342.500,481 L1349.500,476.500"/>
<path d="M1348,479.500 H1356.500 V491.500 Q1356.500,493.500 1352,493.500 Q1348,493.500 1346,492.500 M1348,478.800 Q1352,476 1356.500,479"/>
</g>
<!-- Display -->
<g class="w"><circle cx="1339.500" cy="542" r="5"/><circle cx="1351" cy="542" r="5"/><path d="M1344.500,541 Q1345.300,540 1346,541 M1334.500,540.500 L1333,538.500 M1356,540.500 L1357.500,538.500"/></g>
<!-- Soften -->
<g>
<circle cx="1345.500" cy="601.800" r="11.500" fill="none" stroke="#f2f4f5" stroke-width="1.200"/>
<path d="M1345.500,590 V613.500" stroke="#f2f4f5" stroke-width="1.300"/>
<path d="M1349,591 V612.500 M1353,593.500 V610 M1346,594 H1354 M1346,598 H1356 M1346,602 H1357 M1346,606 H1356 M1346,610 H1353" stroke="#d8dcdf" stroke-width=".8" fill="none"/>
</g>
<!-- Outliner -->
<g class="t"><rect x="1333.500" y="649.500" width="18" height="5.500"/><rect x="1341" y="657" width="17" height="6.500"/><rect x="1341" y="666" width="17" height="7"/><path d="M1338,655 V670 H1341 M1338,660 H1341"/></g>
<!-- Info / Help -->
<circle cx="1345.500" cy="721.500" r="11.700" fill="none" stroke="#f2f4f5" stroke-width="1.200"/>
<rect x="1344.600" y="719" width="1.800" height="9.500" fill="#f2f4f5"/><circle cx="1345.500" cy="715.500" r="1.200" fill="#f2f4f5"/>
<circle cx="1345.500" cy="781.500" r="11.700" fill="none" stroke="#f2f4f5" stroke-width="1.200"/>
<text x="1345.500" y="788" font-size="18" fill="#f2f4f5" text-anchor="middle">?</text>

<!-- home indicator -->
<rect x="507" y="948.500" width="364" height="6" rx="3" fill="#0a0a0a"/>
</svg>
</body></html>
